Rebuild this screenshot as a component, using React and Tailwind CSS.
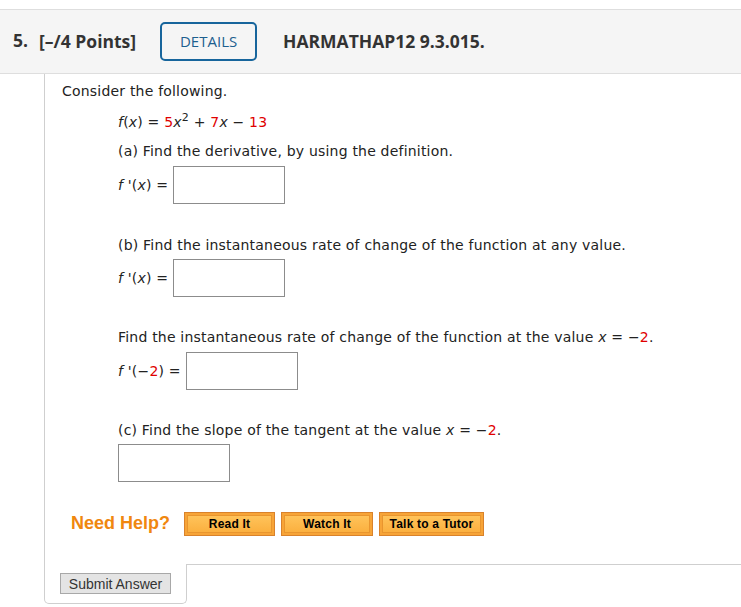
const red = 'text-[#e00000]'

function AnswerBox({ className = '' }) {
  return <div className={`w-[112px] h-[38px] border border-[#8c8c8c] bg-white ${className}`} />
}

function HelpButton({ label, width }) {
  return (
    <button
      className={`${width} h-[24px] border border-[#d9822b] bg-[#f7a437] p-[2px] cursor-pointer`}
    >
      <span className="flex h-full items-center justify-center bg-[linear-gradient(#ffc35a,#fbb03f)] border border-[#e9952e] text-[12px] font-bold text-black font-[family-name:Liberation_Sans,Arial,sans-serif]">
        {label}
      </span>
    </button>
  )
}

export default function App() {
  return (
    <div className="w-[741px] h-[607px] bg-white pt-[9px] overflow-hidden">
      {/* Question header */}
      <div className="h-[65px] border-y border-[#dedede] bg-[#f5f5f5] flex items-center font-[family-name:Open_Sans,sans-serif] text-[#333]">
        <span className="ml-[13px] text-[17.5px] font-bold -mt-[3px]">5.</span>
        <span className="ml-[11px] text-[17.5px] font-bold">[–/4 Points]</span>
        <button className="ml-[24px] w-[97px] h-[39px] border-2 border-[#17659c] rounded-[5px] text-[15px] font-medium text-[#1d5f8f]">
          DETAILS
        </button>
        <span className="ml-[26px] text-[17.5px] font-bold">HARMATHAP12 9.3.015.</span>
      </div>

      {/* Question body */}
      <div className="ml-[44px] font-[family-name:DejaVu_Sans,Verdana,sans-serif] text-[14px] tracking-[0.2px] text-[#222]">
        <div className="h-[490px] border-l border-[#cfcfcf] pl-[17px] pt-[9px]">
          <p className="leading-[16px]">Consider the following.</p>

          <div className="ml-[56px]">
            <p className="mt-[15px] leading-[16px]">
              <i>f</i>(<i>x</i>) = <span className={red}>5</span><i>x</i>
              <sup className="text-[11px] relative -top-[6px]">2</sup> + <span className={red}>7</span><i>x</i> − <span className={red}>13</span>
            </p>
            <p className="mt-[13px] leading-[16px]">(a) Find the derivative, by using the definition.</p>
            <div className="mt-[7px] flex items-center gap-[5px]">
              <span><i>f</i> '(<i>x</i>) =</span>
              <AnswerBox />
            </div>

            <p className="mt-[33px] leading-[16px]">(b) Find the instantaneous rate of change of the function at any value.</p>
            <div className="mt-[6px] flex items-center gap-[5px]">
              <span><i>f</i> '(<i>x</i>) =</span>
              <AnswerBox />
            </div>

            <p className="mt-[32px] leading-[16px]">
              Find the instantaneous rate of change of the function at the value <i>x</i> = −<span className={red}>2</span>.
            </p>
            <div className="mt-[7px] flex items-center gap-[5px]">
              <span><i>f</i> '(−<span className={red}>2</span>) =</span>
              <AnswerBox />
            </div>

            <p className="mt-[32px] leading-[16px]">
              (c) Find the slope of the tangent at the value <i>x</i> = −<span className={red}>2</span>.
            </p>
            <AnswerBox className="mt-[6px]" />
          </div>

          <div className="mt-[28px] ml-[9px] flex items-center">
            <span className="text-[18px] tracking-normal font-bold text-[#f0870f] font-[family-name:Liberation_Sans,Arial,sans-serif] mr-[14px]">
              Need Help?
            </span>
            <HelpButton label="Read It" width="w-[91px]" />
            <span className="w-[6px]" />
            <HelpButton label="Watch It" width="w-[92px]" />
            <span className="w-[6px]" />
            <HelpButton label="Talk to a Tutor" width="w-[105px]" />
          </div>
        </div>

        {/* Bottom tab with submit */}
        <div className="flex h-[40px]">
          <div className="w-[143px] border-l border-r border-b border-[#cfcfcf] rounded-b-[5px] pl-[15px] pt-[9px]">
            <button className="w-[111px] h-[21px] border border-[#a8a8a8] bg-[#e4e4e4] text-[14px] tracking-normal text-[#333] leading-none font-[family-name:Liberation_Sans,Arial,sans-serif]">
              Submit Answer
            </button>
          </div>
          <div className="flex-1 border-t border-[#cfcfcf]" />
        </div>
      </div>
    </div>
  )
}
